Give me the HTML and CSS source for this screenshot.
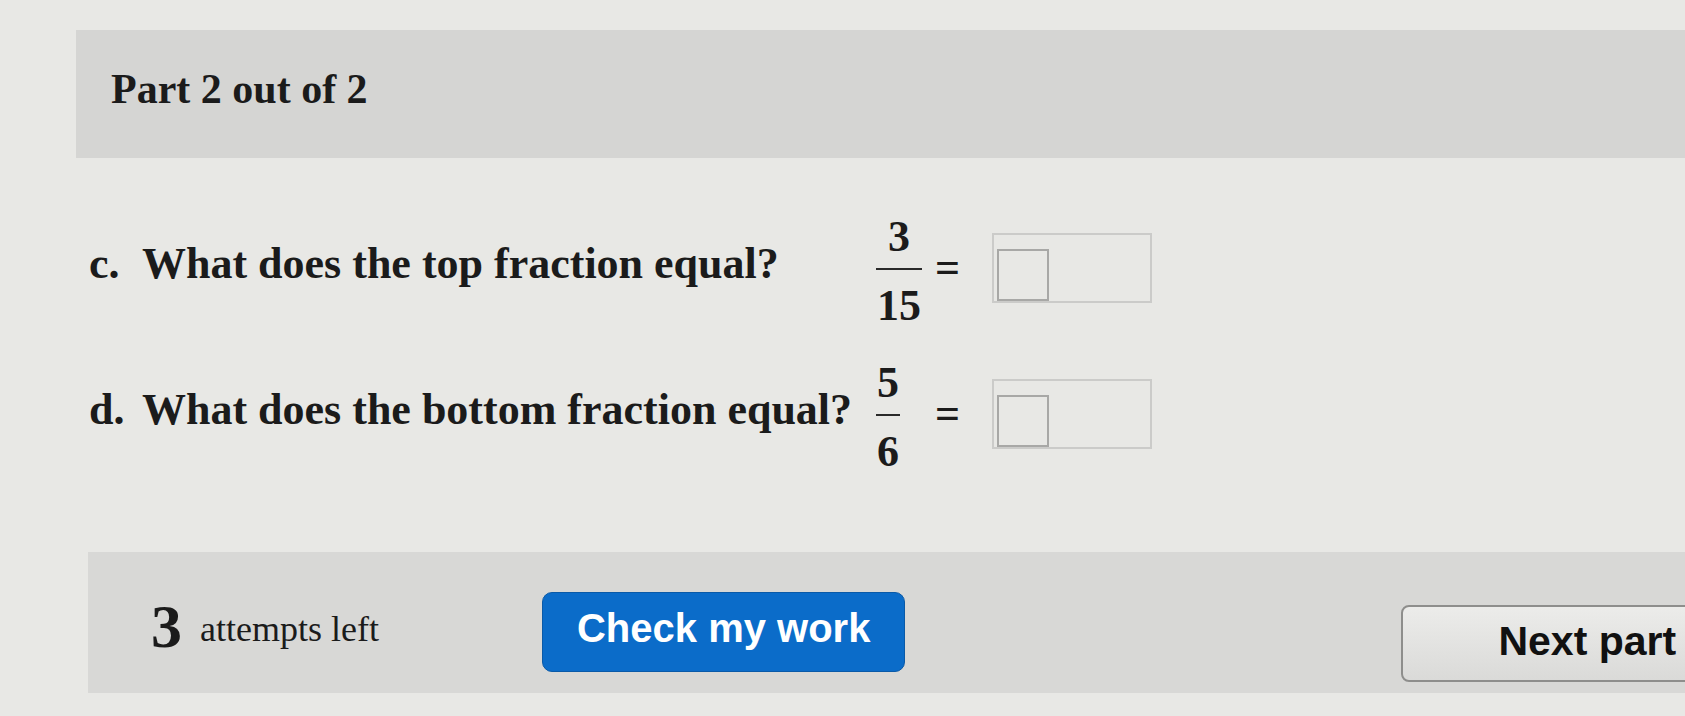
FILE: index.html
```html
<!DOCTYPE html>
<html lang="en">
<head>
    <meta charset="UTF-8">
    <meta name="viewport" content="width=device-width, initial-scale=1.0">
    <title>Part 2 out of 2</title>
    <link rel="stylesheet" href="styles.css">
</head>
<body>
    <div class="part-header">Part 2 out of 2</div>

    <div class="questions">
        <div class="question"><span class="label">c.</span>What does the top fraction equal?</div>
        <div class="fraction">
            <span class="num">3</span>
            <span class="bar"></span>
            <span class="den">15</span>
        </div>
        <div class="equals">=</div>
        <div class="answer"><span class="slot"></span></div>

        <div class="question"><span class="label">d.</span>What does the bottom fraction equal?</div>
        <div class="fraction">
            <span class="num">5</span>
            <span class="bar"></span>
            <span class="den">6</span>
        </div>
        <div class="equals">=</div>
        <div class="answer"><span class="slot"></span></div>
    </div>

    <div class="action-bar">
        <div class="attempts"><span class="count">3</span> <span class="attempts-text">attempts left</span></div>
        <button class="check-btn">Check my work</button>
        <button class="next-btn">Next part</button>
    </div>
</body>
</html>
```

FILE: styles.css
```css
html, body {
    margin: 0;
    padding: 0;
}
body {
    font-family: 'Liberation Serif', 'Times New Roman', serif;
    background-color: #e8e8e5;
    color: #1b1b1b;
    overflow: hidden;
    height: 716px;
}
.part-header {
    margin: 30px 0 0 76px;
    height: 128px;
    box-sizing: border-box;
    padding: 38px 0 0 35px;
    background-color: #d5d5d3;
    font-size: 42px;
    font-weight: bold;
    line-height: 1;
}
.questions {
    display: grid;
    grid-template-columns: 787px 59px 57px auto;
    grid-template-rows: 110px 110px;
    row-gap: 36px;
    margin: 55px 0 0 89px;
    font-weight: bold;
    font-size: 44px;
    line-height: 1;
}
.question {
    align-self: center;
    padding-bottom: 8px;
    white-space: nowrap;
}
.label {
    display: inline-block;
    width: 53px;
}
.fraction {
    align-self: center;
    justify-self: start;
    display: flex;
    flex-direction: column;
    align-items: center;
    margin-top: 6px;
}
.num {
    padding: 0 1px 9px;
}
.bar {
    align-self: stretch;
    height: 2px;
    background-color: #2a2a2a;
}
.den {
    padding: 14px 1px 0;
}
.equals {
    align-self: center;
}
.answer {
    align-self: center;
    width: 160px;
    height: 70px;
    box-sizing: border-box;
    border: 2px solid #cbcbc9;
    display: flex;
    align-items: flex-end;
    padding-left: 3px;
}
.slot {
    width: 52px;
    height: 52px;
    box-sizing: border-box;
    border: 2px solid #a8a8a6;
}
.action-bar {
    display: flex;
    align-items: flex-start;
    margin: 83px 0 0 88px;
    height: 141px;
    padding-left: 63px;
    background-color: #d8d8d6;
    overflow: hidden;
}
.attempts {
    margin-top: 43px;
    line-height: 1;
    white-space: nowrap;
}
.count {
    font-size: 62px;
    font-weight: bold;
}
.attempts-text {
    font-size: 36px;
    vertical-align: 6px;
    margin-left: 14px;
}
.check-btn {
    margin: 40px 0 0 163px;
    height: 80px;
    padding: 0 34px 8px;
    border: 1px solid #0a5aa8;
    border-radius: 10px;
    background-color: #0b6cc9;
    color: #fff;
    font-family: 'Liberation Sans', Arial, sans-serif;
    font-weight: bold;
    font-size: 40px;
    white-space: nowrap;
    flex-shrink: 0;
}
.next-btn {
    margin: 53px 0 0 496px;
    height: 77px;
    padding: 0 95px 4px;
    border: 2px solid #8e8e8c;
    border-radius: 8px;
    background: linear-gradient(#ececea, #dadad8);
    color: #111;
    font-family: 'Liberation Sans', Arial, sans-serif;
    font-weight: bold;
    font-size: 41px;
    white-space: nowrap;
    flex-shrink: 0;
}
```
